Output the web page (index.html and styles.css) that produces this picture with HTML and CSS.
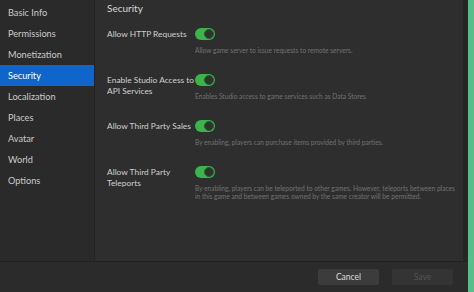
FILE: index.html
```html
<!DOCTYPE html>
<html lang="en">

<head>
    <meta charset="UTF-8">
    <title>Game Settings</title>
    <link rel="stylesheet" href="styles.css">
</head>

<body>
    <div class="app">
        <div class="window">
            <div class="top">
                <ul class="sidebar">
                    <li>Basic Info</li>
                    <li>Permissions</li>
                    <li>Monetization</li>
                    <li class="active">Security</li>
                    <li>Localization</li>
                    <li>Places</li>
                    <li>Avatar</li>
                    <li>World</li>
                    <li>Options</li>
                </ul>
                <div class="main">
                    <h2>Security</h2>
                    <div class="setting">
                        <div class="label">Allow HTTP Requests</div>
                        <div class="control">
                            <span class="toggle"><span class="knob"></span></span>
                            <p class="desc">Allow game server to issue requests to remote servers.</p>
                        </div>
                    </div>
                    <div class="setting">
                        <div class="label">Enable Studio Access to<br>API Services</div>
                        <div class="control">
                            <span class="toggle"><span class="knob"></span></span>
                            <p class="desc">Enables Studio access to game services such as Data Stores</p>
                        </div>
                    </div>
                    <div class="setting">
                        <div class="label">Allow Third Party Sales</div>
                        <div class="control">
                            <span class="toggle"><span class="knob"></span></span>
                            <p class="desc">By enabling, players can purchase items provided by third parties.</p>
                        </div>
                    </div>
                    <div class="setting">
                        <div class="label">Allow Third Party<br>Teleports</div>
                        <div class="control">
                            <span class="toggle"><span class="knob"></span></span>
                            <p class="desc">By enabling, players can be teleported to other games. However, teleports between places<br>in this game and between games owned by the same creator will be permitted.</p>
                        </div>
                    </div>
                </div>
                <div class="scrollbar"></div>
            </div>
            <div class="footer">
                <button class="btn cancel">Cancel</button>
                <button class="btn save" disabled>Save</button>
            </div>
        </div>
        <div class="edge"></div>
    </div>
</body>

</html>
```

FILE: styles.css
```css
body {
    margin: 0;
    padding: 0;
    font-family: 'Lato', 'Open Sans', sans-serif;
    background-color: #2e2e2e;
}

.app {
    display: flex;
    width: 474px;
    height: 292px;
    overflow: hidden;
}

.window {
    flex: 1;
    display: flex;
    flex-direction: column;
}

.top {
    flex: 1;
    display: flex;
    min-height: 0;
}

.sidebar {
    width: 94px;
    margin: 0;
    padding: 2px 0 0;
    list-style: none;
    background: #2a2a2a;
    border-right: 1px solid #232323;
}

.sidebar li {
    height: 21px;
    line-height: 21px;
    padding-left: 8px;
    font-size: 9.2px;
    color: #cbcbcb;
}

.sidebar li.active {
    background: #0f65c9;
    color: #fff;
}

.main {
    flex: 1;
    padding: 1px 0 0 12px;
    background: #2e2e2e;
}

.main h2 {
    margin: 0 0 13px;
    font-size: 10px;
    font-weight: normal;
    line-height: 14px;
    color: #d8d8d8;
}

.setting {
    display: flex;
    margin-bottom: 20px;
}

.label {
    width: 88px;
    font-size: 8.4px;
    line-height: 11px;
    padding-top: 1px;
    color: #d0d0d0;
    white-space: nowrap;
}

.control {
    flex: 1;
}

.toggle {
    display: block;
    position: relative;
    width: 20px;
    height: 12px;
    border-radius: 6px;
    background: #3cb34b;
}

.knob {
    position: absolute;
    top: 1px;
    right: 1px;
    width: 8px;
    height: 8px;
    border-radius: 50%;
    background: #2d332d;
    border: 1px solid #2a5a31;
}

.desc {
    margin: 6px 0 0;
    font-size: 6.6px;
    line-height: 8px;
    color: #727272;
    white-space: nowrap;
}

.scrollbar {
    width: 5px;
    background: #262626;
}

.footer {
    height: 31px;
    display: flex;
    justify-content: flex-end;
    align-items: flex-start;
    gap: 13px;
    padding: 7px 15px 0 0;
    box-sizing: border-box;
    background: #2b2b2b;
    border-top: 1px solid #222;
}

.btn {
    width: 61px;
    height: 16px;
    padding: 0;
    border: none;
    border-radius: 2px;
    font-family: inherit;
    font-size: 8.5px;
}

.cancel {
    background: #3c3c3c;
    color: #dcdcdc;
}

.save {
    background: #343434;
    color: #555;
}

.edge {
    width: 6px;
    background: #56c08b;
}
```
